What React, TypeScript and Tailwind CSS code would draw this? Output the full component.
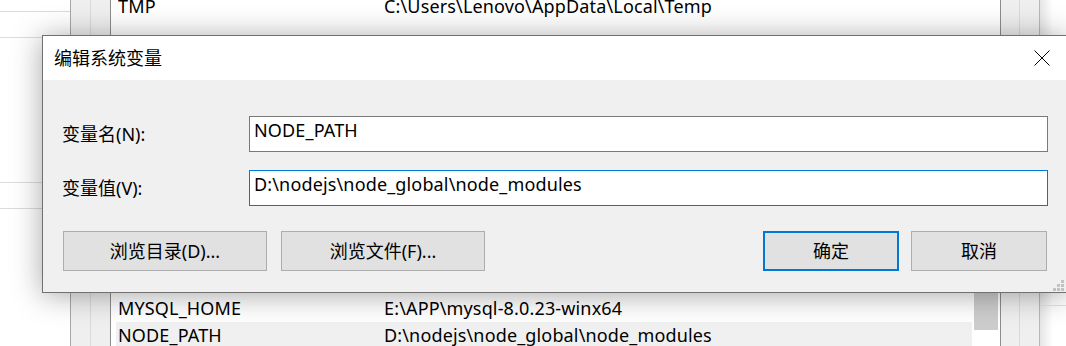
const FONT = "font-['Noto_Sans','Noto_Sans_CJK_SC',sans-serif]";

function ListRow({ name, value, selected }: { name: string; value: string; selected?: boolean }) {
  return (
    <div className={`flex h-[27px] shrink-0 items-center ml-[5px] leading-[27px] whitespace-nowrap tracking-[0.15px] ${selected ? "bg-[#f0f0f0]" : ""}`}>
      <div className="w-[268px] shrink-0 pl-[2px]">{name}</div>
      <div>{value}</div>
    </div>
  );
}

function Grip() {
  const dots: [number, number][] = [
    [8, 0],
    [4, 4],
    [8, 4],
    [0, 8],
    [4, 8],
    [8, 8],
  ];
  return (
    <svg width="11" height="11" viewBox="0 0 11 11" className="absolute right-[3px] bottom-[1px]">
      {dots.map(([x, y], i) => (
        <rect key={i} x={x} y={y} width="3" height="3" fill="#c2c2c2" />
      ))}
    </svg>
  );
}

export default function App() {
  return (
    <div className={`relative w-[1066px] h-[346px] overflow-hidden bg-white text-[18px] text-black ${FONT}`}>
      {/* background window */}
      <div className="flex h-full">
        {/* left panel */}
        <div className="w-[70px] shrink-0 flex flex-col">
          <div className="h-[12px] border-b border-[#dcdcdc]" />
          <div className="h-[26px] border-b border-[#dcdcdc]" />
          <div className="h-[145px] border-b border-[#dcdcdc]" />
          <div className="h-[26px] border-b border-[#dcdcdc]" />
        </div>
        {/* gray columns */}
        <div className="w-[41px] shrink-0 flex bg-[#efefef] border-l border-r border-l-[#a8a8a8] border-r-[#8c8c8c]">
          <div className="w-[20px] border-r border-[#dadada]" />
        </div>
        {/* list */}
        <div className="w-[889px] shrink-0 flex">
          <div className="flex-1 flex flex-col mr-[1px]">
            <div className="-mt-[7px]">
              <ListRow name="TMP" value="C:\Users\Lenovo\AppData\Local\Temp" />
            </div>
            <div className="flex-1" />
            <div className="-mb-[3px]">
              <ListRow name="MYSQL_HOME" value="E:\APP\mysql-8.0.23-winx64" />
              <ListRow name="NODE_PATH" value="D:\nodejs\node_global\node_modules" selected />
            </div>
          </div>
          <div className="w-[25px] flex flex-col">
            <div className="flex-1" />
            <div className="h-[60px] mb-[16px] ml-[1px] bg-[#cdcdcd]" />
          </div>
          <div className="w-[2px]" />
        </div>
        {/* right columns */}
        <div className="w-[40px] shrink-0 flex bg-[#efefef] border-l border-r border-l-[#8c8c8c] border-r-[#b8b8b8]">
          <div className="w-[19px] border-r border-[#dadada]" />
        </div>
        <div className="flex-1 flex flex-col bg-gradient-to-r from-[#e6e6e6] via-white to-white">
          <div className="h-[306px] border-b border-[#e4e4e4]" />
        </div>
      </div>

      {/* dialog */}
      <div className="absolute left-[42px] top-[35px] w-[1026px] h-[258px] border border-[#707070] bg-[#f0f0f0] flex flex-col shadow-[0_2px_28px_rgba(0,0,0,0.35)]">
        <div className="h-[44px] shrink-0 bg-white flex items-center justify-between pl-[11px] pr-[17px]">
          <span className="leading-[24px]">编辑系统变量</span>
          <svg width="16" height="16" viewBox="0 0 16 16">
            <path d="M0.5 0.5 L15.5 15.5 M15.5 0.5 L0.5 15.5" stroke="#000" strokeWidth="1" fill="none" />
          </svg>
        </div>
        <div className="relative flex-1 flex flex-col pt-[36px] pl-[19px] pr-[19px]">
          <div className="flex items-center h-[36px]">
            <div className="w-[187px] shrink-0 leading-[24px]">变量名(N):</div>
            <div className="flex-1 h-[36px] border border-[#7a7a7a] bg-white pl-[4px] pt-[1px] leading-[24px] whitespace-nowrap tracking-[0.15px]">
              NODE_PATH
            </div>
          </div>
          <div className="flex items-center h-[36px] mt-[18px]">
            <div className="w-[187px] shrink-0 leading-[24px]">变量值(V):</div>
            <div className="flex-1 h-[36px] border border-[#0078d7] bg-white pl-[4px] pt-[1px] leading-[24px] whitespace-nowrap tracking-[0.15px]">
              D:\nodejs\node_global\node_modules
            </div>
          </div>
          <div className="flex h-[40px] mt-[25px]">
            <button className="ml-[1px] w-[204px] h-[40px] bg-[#e1e1e1] border border-[#adadad] leading-[24px]">
              浏览目录(D)...
            </button>
            <button className="ml-[14px] w-[204px] h-[40px] bg-[#e1e1e1] border border-[#adadad] leading-[24px]">
              浏览文件(F)...
            </button>
            <button className="ml-auto w-[136px] h-[40px] bg-[#e1e1e1] border-2 border-[#0078d7] leading-[24px]">
              确定
            </button>
            <button className="ml-[12px] mr-[1px] w-[136px] h-[40px] bg-[#e1e1e1] border border-[#adadad] leading-[24px]">
              取消
            </button>
          </div>
          <Grip />
        </div>
      </div>
    </div>
  );
}
